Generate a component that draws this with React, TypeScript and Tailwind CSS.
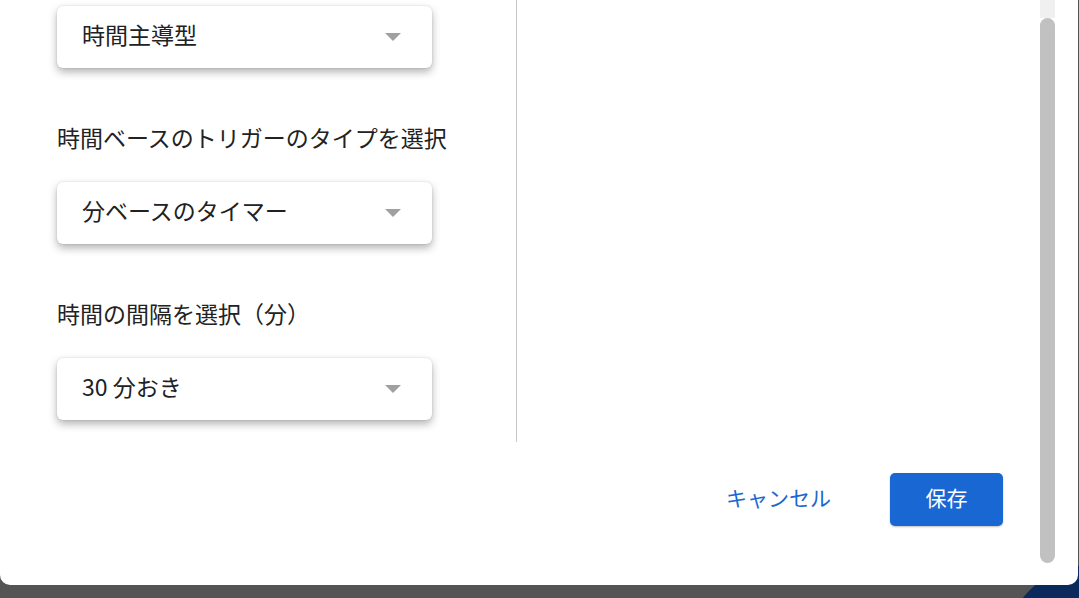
import React from "react";

const font = "font-['Noto_Sans_CJK_JP','Noto_Sans',sans-serif]";

const Select = ({ value }: { value: string }) => (
  <div className="flex h-[62px] w-[375px] items-center justify-between rounded-[6px] bg-white pl-[25px] pr-[31px] shadow-[0_4px_8px_rgba(0,0,0,0.3),0_0_2px_rgba(0,0,0,0.14)]">
    <span className="pb-[5px] text-[23px] leading-none text-[#202124]">{value}</span>
    <span className="h-0 w-0 border-l-[8px] border-r-[8px] border-t-[8px] border-l-transparent border-r-transparent border-t-[#a0a0a0]" />
  </div>
);

const Label = ({ text }: { text: string }) => (
  <div className="mb-[30px] mt-[56px] h-[28px] text-[23px] leading-[26px] text-[#222]">{text}</div>
);

export default function App() {
  return (
    <div className={`relative h-[598px] w-[1079px] overflow-hidden bg-[#545454] ${font}`}>
      {/* page button peeking from behind the dialog */}
      <div className="absolute left-[1005px] top-[565px] h-[170px] w-[170px] rounded-full bg-[#0b2a5c]" />

      <div className="relative flex h-[585px] w-[1078px] rounded-b-[10px] bg-white">
        <div className="flex flex-1 flex-col">
          <div className="flex h-[442px]">
            <div className="w-[517px] border-r border-[#c8c8c8] pl-[57px] pt-[6px]">
              <Select value="時間主導型" />
              <Label text="時間ベースのトリガーのタイプを選択" />
              <Select value="分ベースのタイマー" />
              <Label text="時間の間隔を選択（分）" />
              <Select value="30 分おき" />
            </div>
            <div className="flex-1" />
          </div>

          <div className="mt-[31px] flex items-center justify-end pr-[37px]">
            <button className="mr-[43px] px-4 pb-[4px] text-[21px] leading-none text-[#1967d2]">キャンセル</button>
            <button className="h-[53px] w-[113px] rounded-[5px] bg-[#1967d2] pb-[4px] text-[21px] leading-none text-white shadow-[0_1px_2px_rgba(0,0,0,0.25)]">
              保存
            </button>
          </div>
        </div>

        {/* scrollbar */}
        <div className="flex w-[15px] flex-col">
          <div className="h-[18px] bg-[#f0f0f0]" />
          <div className="h-[545px] rounded-full bg-[#c1c1c1]" />
        </div>
        <div className="w-[23px]" />
      </div>
    </div>
  );
}
